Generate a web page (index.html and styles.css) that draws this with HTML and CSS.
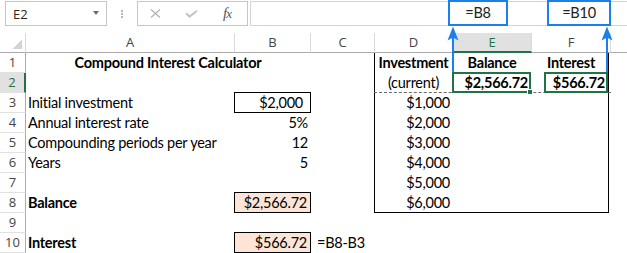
FILE: index.html
```html
<!DOCTYPE html>
<html>
<head>
<meta charset="utf-8">
<title>Compound Interest Calculator</title>
<link rel="stylesheet" href="styles.css">
</head>
<body>
<div class="page">
  <div class="fbar">
    <div class="namebox"><span>E2</span><span class="caret"></span></div>
    <div class="grip"><i></i><i></i><i></i></div>
    <div class="fxbox">
      <svg class="ic-x" width="11" height="9" viewBox="0 0 11 9"><path d="M1 0.5 L10 8.5 M10 0.5 L1 8.5" stroke="#b3b3b3" stroke-width="1.3" fill="none"/></svg>
      <svg class="ic-check" width="13" height="8" viewBox="0 0 13 8"><path d="M1 3.2 L4.6 6.6 L12 0.8" stroke="#c4c4c4" stroke-width="2" fill="none"/></svg>
      <span class="fx">f<span class="fxx">x</span></span>
    </div>
    <div class="finput"></div>
  </div>

  <div class="sheet">
    <div class="cells">
      <div class="corner"></div>
      <div class="ch">A</div><div class="ch">B</div><div class="ch">C</div><div class="ch">D</div><div class="ch sel">E</div><div class="ch">F</div><div class="ch last"></div>

      <div class="rh">1</div><div class="c b ctr span2">Compound Interest Calculator</div><div class="c"></div><div class="c b ctr">Investment</div><div class="c b ctr">Balance</div><div class="c b ctr">Interest</div><div class="c"></div>

      <div class="rh sel">2</div><div class="c"></div><div class="c"></div><div class="c"></div><div class="c ctr">(current)</div><div class="c b r act">$2,566.72<i class="handle"></i></div><div class="c b r act act-f">$566.72</div><div class="c"></div>

      <div class="rh">3</div><div class="c">Initial investment</div><div class="c r box pad">$2,000</div><div class="c"></div><div class="c r">$1,000</div><div class="c"></div><div class="c"></div><div class="c"></div>

      <div class="rh">4</div><div class="c">Annual interest rate</div><div class="c r">5%</div><div class="c"></div><div class="c r">$2,000</div><div class="c"></div><div class="c"></div><div class="c"></div>

      <div class="rh">5</div><div class="c">Compounding periods per year</div><div class="c r">12</div><div class="c"></div><div class="c r">$3,000</div><div class="c"></div><div class="c"></div><div class="c"></div>

      <div class="rh">6</div><div class="c">Years</div><div class="c r">5</div><div class="c"></div><div class="c r">$4,000</div><div class="c"></div><div class="c"></div><div class="c"></div>

      <div class="rh">7</div><div class="c"></div><div class="c"></div><div class="c"></div><div class="c r">$5,000</div><div class="c"></div><div class="c"></div><div class="c"></div>

      <div class="rh">8</div><div class="c b">Balance</div><div class="c r box peach">$2,566.72</div><div class="c"></div><div class="c r">$6,000</div><div class="c"></div><div class="c"></div><div class="c"></div>

      <div class="rh">9</div><div class="c"></div><div class="c"></div><div class="c"></div><div class="c"></div><div class="c"></div><div class="c"></div><div class="c"></div>

      <div class="rh">10</div><div class="c b">Interest</div><div class="c r box peach">$566.72</div><div class="c formula">=B8-B3</div><div class="c"></div><div class="c"></div><div class="c"></div><div class="c"></div>
    </div>

    <div class="marks">
      <div class="range"></div>
      <div class="dashes"></div>
    </div>
  </div>

  <div class="refbox ref-b8">=B8</div>
  <div class="refbox ref-b10">=B10</div>
  <svg class="arrows" width="627" height="253" viewBox="0 0 627 253">
    <rect x="452" y="34" width="2" height="38" fill="#1a80ec"/>
    <path d="M453 26.5 L458.5 40.5 L453 37.5 L447.5 40.5 Z" fill="#1a80ec"/>
    <rect x="606" y="34" width="2" height="38" fill="#1a80ec"/>
    <path d="M607 26.5 L612.5 40.5 L607 37.5 L601.5 40.5 Z" fill="#1a80ec"/>
  </svg>
</div>
</body>
</html>
```

FILE: styles.css
```css
* {
  box-sizing: border-box;
  margin: 0;
  padding: 0;
}

body {
  margin: 0;
  background: #fff;
  width: 627px;
  height: 253px;
  overflow: hidden;
  font-family: Lato, "Liberation Sans", sans-serif;
  color: #000;
}

.page {
  position: relative;
  width: 627px;
  height: 253px;
}

/* ---------- formula bar ---------- */
.fbar {
  display: flex;
  align-items: flex-start;
  height: 33px;
  padding-top: 1px;
}

.namebox {
  margin-left: 5px;
  width: 102px;
  height: 25px;
  border: 1px solid #c6c6c6;
  display: flex;
  align-items: center;
  justify-content: space-between;
  padding: 0 7px 0 7px;
  font: 13px "Open Sans", sans-serif;
  color: #262626;
}

.caret {
  width: 0;
  height: 0;
  border-left: 3.5px solid transparent;
  border-right: 3.5px solid transparent;
  border-top: 4px solid #6a6a6a;
  margin-bottom: 1px;
}

.grip {
  width: 30px;
  height: 25px;
  display: flex;
  flex-direction: column;
  align-items: center;
  justify-content: center;
  gap: 1px;
}

.grip i {
  display: block;
  width: 2px;
  height: 2px;
  background: #b8b8b8;
}

.fxbox {
  width: 111px;
  height: 25px;
  border: 1px solid #c6c6c6;
  display: flex;
  align-items: center;
  padding-left: 12px;
}

.ic-check {
  margin-left: 24px;
  margin-top: 1px;
}

.fx {
  margin-left: 25px;
  font: italic 15px "Liberation Serif", serif;
  color: #555;
  letter-spacing: -1px;
}

.fxx {
  font-size: 13px;
}

.finput {
  flex: 1;
  margin-left: 2px;
  height: 25px;
  border: 1px solid #d4d4d4;
  border-right: none;
}

/* ---------- sheet ---------- */
.sheet {
  display: grid;
}

.cells,
.marks {
  grid-area: 1 / 1;
  display: grid;
  grid-template-columns: 26px 209px 76px 64px 78px 79px 79px 16px;
  grid-template-rows: repeat(11, 20px);
}

.marks {
  pointer-events: none;
}

.corner {
  border-right: 1px solid #dadada;
  border-bottom: 1px solid #ababab;
  background: linear-gradient(to top left, #d4d4d4 50%, transparent 50%) no-repeat;
  background-size: 9px 10px;
  background-position: right 3px bottom 3px;
}

.ch {
  border-right: 1px solid #dadada;
  border-bottom: 1px solid #ababab;
  text-align: center;
  font: 13px/19px "Open Sans", sans-serif;
  color: #444;
}

.ch.last {
  border-right: none;
}

.ch.sel {
  background: #e1e1e1;
  color: #217346;
  border-bottom: 2px solid #217346;
}

.rh {
  border-right: 1px solid #ababab;
  border-bottom: 1px solid #e1e1e1;
  text-align: center;
  font: 13px/19px "Open Sans", sans-serif;
  color: #444;
}

.rh.sel {
  background: #e1e1e1;
  color: #217346;
  border-right: 2px solid #217346;
}

.c {
  font-size: 14.5px;
  letter-spacing: -0.25px;
  line-height: 18px;
  padding: 1px 3px 0 2px;
  white-space: nowrap;
}

.b { font-weight: bold; }
.r { text-align: right; }
.ctr { text-align: center; }
.span2 { grid-column: span 2; }

.box {
  margin: -1px 0 0 -1px;
  border: 1px solid #000;
  line-height: 18px;
}

.box.pad { padding-right: 7px; }

.peach { background: #fce4d6; }

.formula { padding-left: 6px; }

.act {
  position: relative;
  margin: -1px 1px 0 -1px;
  border: 2px solid #217346;
  padding-right: 1px;
  line-height: 16px;
}

.act-f {
  margin-left: 12px;
  margin-right: 3px;
}

.handle {
  position: absolute;
  right: -4px;
  bottom: -4px;
  width: 6px;
  height: 6px;
  background: #217346;
  border: 1px solid #fff;
}

.range {
  grid-column: 5 / 8;
  grid-row: 2 / 10;
  margin: 0 2px 0 -1px;
  border: 1px solid #000;
  border-top: none;
}

.dashes {
  grid-column: 5 / 8;
  grid-row: 3 / 4;
  margin-left: -1px;
  border-bottom: 1px dashed #6b6b6b;
}

/* ---------- annotations ---------- */
.refbox {
  position: absolute;
  top: 0;
  height: 26px;
  border: 2px solid #1a80ec;
  background: #fff;
  font-size: 14.5px;
  letter-spacing: -0.25px;
  line-height: 22px;
  text-align: center;
  color: #222;
}

.ref-b8 { left: 448px; width: 60px; }
.ref-b10 { left: 547px; width: 64px; }

.arrows {
  position: absolute;
  left: 0;
  top: 0;
}
```
